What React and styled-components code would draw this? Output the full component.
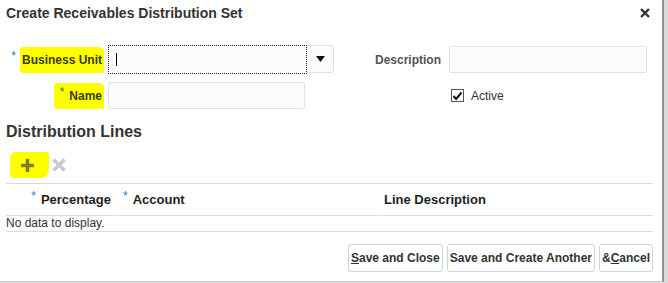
import React from "react";
import styled, { createGlobalStyle } from "styled-components";

const GlobalStyle = createGlobalStyle`
  html, body {
    margin: 0;
    padding: 0;
    background: #d9d9d9;
  }
  body {
    font-family: "Liberation Sans", Arial, sans-serif;
    color: #333;
  }
`;

const Dialog = styled.div`
  width: 664px;
  height: 282px;
  box-sizing: border-box;
  background: #fff;
  border-right: 2px solid #8e8e8e;
  border-bottom: 1px solid #c6cfd8;
  padding: 0 9px 0 6px;
  display: flex;
  flex-direction: column;
`;

const Header = styled.div`
  display: flex;
  align-items: center;
  justify-content: space-between;
  height: 26px;
`;

const Title = styled.h1`
  margin: 0;
  font-size: 14px;
  line-height: 16px;
  font-weight: bold;
  color: #333;
`;

const Close = styled.button`
  border: 0;
  background: none;
  padding: 0;
  margin-right: 3px;
  width: 10px;
  height: 10px;
  display: flex;
  cursor: pointer;
`;

const Form = styled.div`
  display: grid;
  grid-template-columns: 102px 226px 115px 198px;
  grid-template-rows: 29px 27px;
  row-gap: 8px;
  margin-top: 19px;
  align-items: center;
`;

const Label = styled.div`
  display: flex;
  justify-content: flex-end;
  align-items: center;
  padding-right: ${(p) => p.$pad || 4}px;
  font-size: 12px;
  font-weight: bold;
  color: ${(p) => (p.$muted ? "#555" : "#333")};
`;

const Mark = styled.span`
  background: #ffff00;
  color: #3c3c00;
  padding: 6px 2px 6px ${(p) => p.$left || 2}px;
  border-radius: 3px 5px 2px 4px;
`;

const Req = styled.span`
  color: ${(p) => (p.$onMark ? "#2f7a2f" : "#2b78c4")};
  font-size: 12px;
  font-weight: normal;
  position: relative;
  top: -4px;
  margin-right: ${(p) => p.$gap || 4}px;
`;

const Combo = styled.div`
  display: flex;
  height: 29px;
`;

const ComboField = styled.div`
  width: 199px;
  box-sizing: border-box;
  border: 1px dotted #222;
  background: #fbfcfd;
  display: flex;
  align-items: center;
  padding-left: 7px;
`;

const Caret = styled.span`
  width: 1px;
  height: 13px;
  background: #000;
`;

const ComboButton = styled.div`
  width: 27px;
  height: 28px;
  box-sizing: border-box;
  border: 1px solid #dde2e7;
  border-left: 0;
  border-radius: 0 3px 3px 0;
  background: #fbfcfd;
  display: flex;
  align-items: center;
  justify-content: center;
`;

const TextInput = styled.div`
  width: ${(p) => p.$w || 198}px;
  height: 27px;
  box-sizing: border-box;
  border: 1px solid #dfe4e9;
  border-radius: 2px;
  background: #fbfcfd;
`;

const Check = styled.label`
  display: flex;
  align-items: center;
  gap: 7px;
  margin-left: 2px;
  font-size: 12px;
  color: #333;
`;

const Box = styled.span`
  width: 13px;
  height: 13px;
  box-sizing: border-box;
  border: 1px solid #555;
  background: #fff;
  display: flex;
  align-items: center;
  justify-content: center;
`;

const Section = styled.h2`
  margin: 14px 0 0;
  font-size: 16px;
  line-height: 18px;
  font-weight: bold;
  color: #333;
`;

const Toolbar = styled.div`
  display: flex;
  align-items: center;
  height: 26px;
  margin-top: 11px;
`;

const ToolHi = styled.span`
  width: 39px;
  height: 26px;
  margin-left: 4px;
  background: #ffff00;
  border-radius: 6px 3px 8px 4px;
  display: flex;
  align-items: center;
  padding-left: 11px;
  box-sizing: border-box;
`;

const ToolBtn = styled.span`
  display: flex;
  margin-left: 3px;
`;

const Table = styled.div`
  margin-top: 5px;
  border-top: 1px solid #d6dde5;
`;

const HeadRow = styled.div`
  display: grid;
  grid-template-columns: 111px 260px 1fr;
  column-gap: 1px;
  height: 32px;
`;

const HeadCell = styled.div`
  display: flex;
  align-items: center;
  justify-content: ${(p) => (p.$right ? "flex-end" : "flex-start")};
  padding: ${(p) => (p.$right ? "0 6px 0 0" : "0 0 0 5px")};
  border-bottom: 1px solid #d6dde5;
  font-size: 13px;
  font-weight: bold;
  color: #1e1e1e;
`;

const EmptyRow = styled.div`
  height: 15px;
  border-bottom: 1px solid #d6dde5;
  font-size: 12px;
  line-height: 15px;
  color: #333;
`;

const Footer = styled.div`
  display: flex;
  justify-content: flex-end;
  gap: 4px;
  margin-top: 12px;
`;

const Button = styled.button`
  height: 28px;
  padding: 0 2px;
  box-sizing: border-box;
  border: 1px solid #cdd4db;
  border-radius: 3px;
  background: #fff;
  font-family: "Liberation Sans", Arial, sans-serif;
  font-size: 12px;
  font-weight: bold;
  color: #333;
  cursor: pointer;

  u {
    text-decoration: underline;
  }
`;

export default function App() {
  return (
    <>
      <GlobalStyle />
      <Dialog>
        <Header>
          <Title>Create Receivables Distribution Set</Title>
          <Close aria-label="Close">
            <svg width="10" height="10" viewBox="0 0 10 10">
              <path d="M1 1L9 9M9 1L1 9" stroke="#333" strokeWidth="2.4" />
            </svg>
          </Close>
        </Header>

        <Form>
          <Label>
            <Req>*</Req>
            <Mark>Business Unit</Mark>
          </Label>
          <Combo>
            <ComboField>
              <Caret />
            </ComboField>
            <ComboButton>
              <svg width="9" height="6" viewBox="0 0 9 6">
                <path d="M0 0H9L4.5 6Z" fill="#111" />
              </svg>
            </ComboButton>
          </Combo>
          <Label $pad={8} $muted>
            Description
          </Label>
          <TextInput />

          <Label>
            <Mark $left={6}>
              <Req $onMark $gap={5}>*</Req>
              Name
            </Mark>
          </Label>
          <TextInput $w={197} />
          <span />
          <Check>
            <Box>
              <svg width="11" height="10" viewBox="0 0 11 10">
                <path d="M1.5 5L4.2 8L9.5 1.5" fill="none" stroke="#111" strokeWidth="2" />
              </svg>
            </Box>
            Active
          </Check>
        </Form>

        <Section>Distribution Lines</Section>

        <Toolbar>
          <ToolHi>
            <svg width="13" height="13" viewBox="0 0 13 13">
              <path d="M6.5 0V13M0 6.5H13" stroke="#7f8000" strokeWidth="3.6" />
            </svg>
          </ToolHi>
          <ToolBtn>
            <svg width="14" height="14" viewBox="0 0 14 14">
              <path d="M1.5 1.5L12.5 12.5M12.5 1.5L1.5 12.5" stroke="#c9c9c9" strokeWidth="3.4" />
            </svg>
          </ToolBtn>
        </Toolbar>

        <Table>
          <HeadRow>
            <HeadCell $right>
              <Req $gap={5}>*</Req>Percentage
            </HeadCell>
            <HeadCell>
              <Req $gap={5}>*</Req>Account
            </HeadCell>
            <HeadCell>Line Description</HeadCell>
          </HeadRow>
          <EmptyRow>No data to display.</EmptyRow>
        </Table>

        <Footer>
          <Button>
            <u>S</u>ave and Close
          </Button>
          <Button>Save and Create Another</Button>
          <Button>
            &amp;<u>C</u>ancel
          </Button>
        </Footer>
      </Dialog>
    </>
  );
}
